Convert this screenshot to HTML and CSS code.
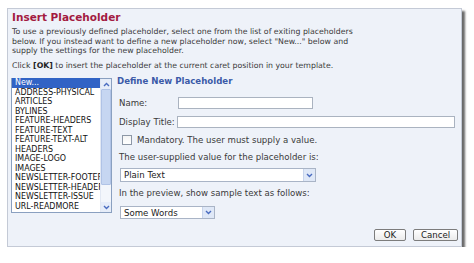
FILE: index.html
```html
<!DOCTYPE html>
<html lang="en">
<head>
    <meta charset="UTF-8">
    <title>Insert Placeholder</title>
    <link rel="stylesheet" href="styles.css">
</head>
<body>

    <!-- Dialog panel -->
    <div class="dialog">
        <h1 class="title">Insert Placeholder</h1>
        <p class="intro">To use a previously defined placeholder, select one from the list of exiting placeholders below. If you instead want to define a new placeholder now, select "New..." below and supply the settings for the new placeholder.</p>
        <p class="hint">Click <b>[OK]</b> to insert the placeholder at the current caret position in your template.</p>

        <div class="main">
            <!-- Placeholder list -->
            <div class="listbox">
                <div class="items">
                    <div class="item selected">New...</div>
                    <div class="item">ADDRESS-PHYSICAL</div>
                    <div class="item">ARTICLES</div>
                    <div class="item">BYLINES</div>
                    <div class="item">FEATURE-HEADERS</div>
                    <div class="item">FEATURE-TEXT</div>
                    <div class="item">FEATURE-TEXT-ALT</div>
                    <div class="item">HEADERS</div>
                    <div class="item">IMAGE-LOGO</div>
                    <div class="item">IMAGES</div>
                    <div class="item">NEWSLETTER-FOOTER</div>
                    <div class="item">NEWSLETTER-HEADER</div>
                    <div class="item">NEWSLETTER-ISSUE</div>
                    <div class="item">URL-READMORE</div>
                </div>
                <div class="scrollbar">
                    <div class="arrow">
                        <svg width="7" height="5" viewBox="0 0 7 5"><path d="M1 4 L3.5 1.5 L6 4" fill="none" stroke="#4a6cc0" stroke-width="1.4"/></svg>
                    </div>
                    <div class="thumb"></div>
                    <div class="track"></div>
                    <div class="arrow">
                        <svg width="7" height="5" viewBox="0 0 7 5"><path d="M1 1 L3.5 3.5 L6 1" fill="none" stroke="#4a6cc0" stroke-width="1.4"/></svg>
                    </div>
                </div>
            </div>

            <!-- New placeholder form -->
            <div class="form">
                <div class="form-heading">Define New Placeholder</div>
                <div class="row row-name">
                    <span class="label field-label">Name:</span>
                    <span class="field name-field"></span>
                </div>
                <div class="row row-title">
                    <span class="label field-label">Display Title:</span>
                    <span class="field title-field"></span>
                </div>
                <div class="row row-check">
                    <span class="checkbox"></span>
                    <span class="label">Mandatory. The user must supply a value.</span>
                </div>
                <div class="text row-text1">The user-supplied value for the placeholder is:</div>
                <div class="select select-type">
                    <span class="select-value">Plain Text</span>
                    <span class="select-btn">
                        <svg width="7" height="5" viewBox="0 0 7 5"><path d="M1 1 L3.5 3.5 L6 1" fill="none" stroke="#4a6cc0" stroke-width="1.4"/></svg>
                    </span>
                </div>
                <div class="text row-text2">In the preview, show sample text as follows:</div>
                <div class="select select-sample">
                    <span class="select-value">Some Words</span>
                    <span class="select-btn">
                        <svg width="7" height="5" viewBox="0 0 7 5"><path d="M1 1 L3.5 3.5 L6 1" fill="none" stroke="#4a6cc0" stroke-width="1.4"/></svg>
                    </span>
                </div>
            </div>
        </div>

        <div class="buttons">
            <button class="btn btn-ok">OK</button>
            <button class="btn btn-cancel">Cancel</button>
        </div>
    </div>

</body>
</html>
```

FILE: styles.css
```css
* {
  margin: 0;
  padding: 0;
  box-sizing: border-box;
}

body {
  background-color: #fff;
  font-family: "DejaVu Sans", Verdana, sans-serif;
  color: #3a3a3a;
  padding: 8px 0 0 7px;
}

.dialog {
  width: 455px;
  height: 239px;
  background: #eef2f9;
  border: 1px solid #c4cad6;
  box-shadow: 3px 3px 2px #6a6a6a;
  padding: 2px 3px 0 4px;
  display: flex;
  flex-direction: column;
}

.title {
  font-size: 10.5px;
  line-height: 12px;
  font-weight: bold;
  color: #a31a41;
}

.intro {
  width: 356px;
  font-size: 7.8px;
  line-height: 9.7px;
  margin-top: 4px;
}

.hint {
  font-size: 7.8px;
  line-height: 9.7px;
  margin-top: 4.5px;
}

.hint b {
  color: #222;
}

.main {
  display: flex;
  margin-top: 8px;
}

/* list of existing placeholders */
.listbox {
  width: 101px;
  height: 135px;
  margin-left: -1px;
  border: 1px solid #8aa0c0;
  background: #fff;
  display: flex;
}

.items {
  flex: 1;
  overflow: hidden;
  font-family: "DejaVu Sans Condensed", "DejaVu Sans", sans-serif;
  font-size: 8.8px;
  line-height: 9.5px;
  color: #111;
  white-space: nowrap;
  margin-top: -1px;
}

.item {
  padding-left: 3px;
}

.item.selected {
  background: #3163c5;
  color: #fff;
}

.scrollbar {
  width: 11px;
  display: flex;
  flex-direction: column;
  background: #f3f6fb;
  border-left: 1px solid #e2e8f3;
}

.arrow {
  height: 10px;
  display: flex;
  justify-content: center;
  align-items: center;
  background: #e6edf9;
}

.thumb {
  height: 96px;
  background: #c6d6f1;
  border: 1px solid #b0c3e6;
  border-radius: 1px;
}

.track {
  flex: 1;
}

/* form on the right */
.form {
  margin-left: 5px;
  flex: 1;
  font-size: 8.6px;
  color: #3a3a3a;
}

.form-heading {
  font-size: 8.6px;
  line-height: 10px;
  font-weight: bold;
  color: #3b5aa8;
  margin-top: -2px;
}

.row {
  display: flex;
  align-items: center;
  height: 12px;
  padding-left: 2px;
}

.row-name {
  margin-top: 10.5px;
}

.row-title {
  margin-top: 7px;
}

.label {
  line-height: 10px;
  white-space: nowrap;
}

.field-label {
  width: 58px;
}

.row-name .field-label {
  width: 59px;
}

.field {
  height: 12px;
  background: #fff;
  border: 1px solid #aab3c0;
}

.name-field {
  width: 135px;
}

.title-field {
  width: 278px;
}

.row-check {
  margin-top: 6.5px;
  padding-left: 5px;
}

.checkbox {
  width: 10px;
  height: 10px;
  border: 1px solid #8d97a6;
  background: linear-gradient(#f4f4f4, #fff);
  margin-right: 5px;
}

.text {
  line-height: 10px;
  padding-left: 2px;
}

.row-text1 {
  margin-top: 6px;
}

.row-text2 {
  margin-top: 6px;
}

.select {
  display: flex;
  align-items: center;
  margin-left: 3px;
  background: #fff;
  border: 1px solid #a9b4c6;
}

.select-type {
  width: 196px;
  height: 14px;
  margin-top: 6px;
}

.select-sample {
  width: 95px;
  height: 13px;
  margin-top: 8px;
}

.select-value {
  flex: 1;
  padding-left: 3px;
  line-height: 10px;
  color: #222;
}

.select-btn {
  width: 12px;
  height: 100%;
  display: flex;
  justify-content: center;
  align-items: center;
  background: #dfe8f7;
  border-left: 1px solid #c8d5ec;
}

/* bottom buttons */
.buttons {
  margin-top: auto;
  display: flex;
  justify-content: flex-end;
  gap: 7px;
  padding-bottom: 5px;
}

.btn {
  height: 12px;
  font-family: "DejaVu Sans", Verdana, sans-serif;
  font-size: 8.6px;
  line-height: 10px;
  color: #222;
  background: linear-gradient(#fff, #ebebeb);
  border: 1px solid #7c7c7c;
  border-radius: 2px;
}

.btn-ok {
  width: 32px;
}

.btn-cancel {
  width: 45px;
}
```
